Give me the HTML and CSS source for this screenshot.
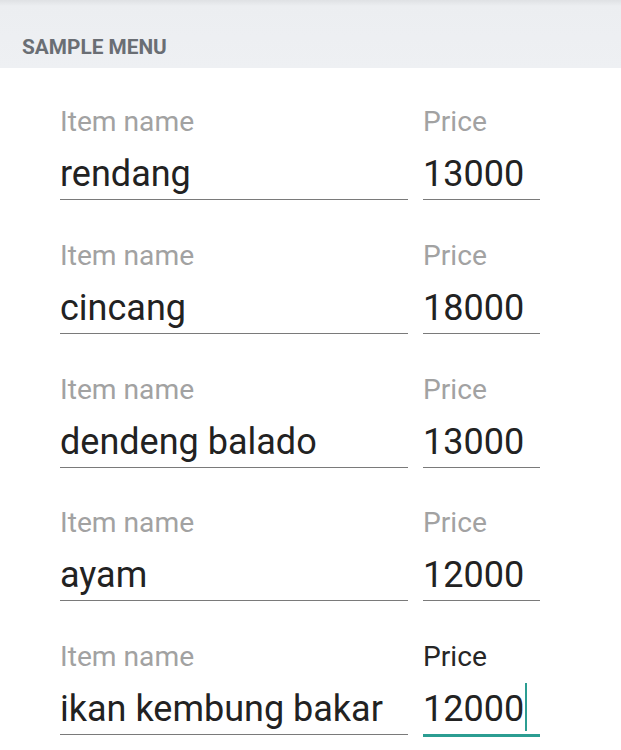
FILE: index.html
```html
<!DOCTYPE html>
<html lang="id">
<head>
  <meta charset="UTF-8" />
  <meta name="viewport" content="width=device-width, initial-scale=1" />
  <title>Sample Menu</title>
  <link rel="stylesheet" href="styles.css">
</head>
<body>

  <header class="bar">
    <h1>SAMPLE MENU</h1>
  </header>

  <main class="menu">

    <div class="row">
      <div class="field name">
        <label>Item name</label>
        <div class="value">rendang</div>
      </div>
      <div class="field price">
        <label>Price</label>
        <div class="value">13000</div>
      </div>
    </div>

    <div class="row">
      <div class="field name">
        <label>Item name</label>
        <div class="value">cincang</div>
      </div>
      <div class="field price">
        <label>Price</label>
        <div class="value">18000</div>
      </div>
    </div>

    <div class="row">
      <div class="field name">
        <label>Item name</label>
        <div class="value">dendeng balado</div>
      </div>
      <div class="field price">
        <label>Price</label>
        <div class="value">13000</div>
      </div>
    </div>

    <div class="row">
      <div class="field name">
        <label>Item name</label>
        <div class="value">ayam</div>
      </div>
      <div class="field price">
        <label>Price</label>
        <div class="value">12000</div>
      </div>
    </div>

    <div class="row">
      <div class="field name">
        <label>Item name</label>
        <div class="value">ikan kembung bakar</div>
      </div>
      <div class="field price focused">
        <label>Price</label>
        <div class="value">12000<span class="caret"></span></div>
      </div>
    </div>

  </main>

</body>
</html>
```

FILE: styles.css
```css
/* Reset & Basic */
* {
  box-sizing: border-box;
}
body {
  margin: 0;
  font-family: Roboto, "Liberation Sans", sans-serif;
  background: #fff;
}

/* top bar */
.bar {
  height: 68px;
  padding: 35px 22px 9px;
  background: linear-gradient(#dfe1e4 0, #eceef1 6px, #eef0f3 100%);
}

.bar h1 {
  margin: 0;
  font-size: 20.8px;
  line-height: 24px;
  font-weight: 700;
  color: #6a6e74;
}

/* list of items */
.menu {
  display: flex;
  flex-direction: column;
  gap: 39.75px;
  padding: 38px 0 0 60px;
}

.row {
  display: flex;
  gap: 15px;
}

.field {
  display: flex;
  flex-direction: column;
}

.name {
  width: 348px;
}

.price {
  width: 117px;
}

label {
  font-size: 28.2px;
  line-height: 32px;
  color: #a2a2a2;
  margin-bottom: 14px;
}

.value {
  font-size: 36px;
  line-height: 45px;
  height: 48px;
  color: #222;
  border-bottom: 1px solid #7a7a7a;
  white-space: nowrap;
}

/* the field being edited */
.focused label {
  color: #262626;
}

.focused .value {
  border-bottom: 3px solid #2b9d92;
  height: 50px;
}

.caret {
  display: inline-block;
  width: 2px;
  height: 48px;
  margin-top: -4px;
  margin-left: 1px;
  vertical-align: top;
  background: #2b9d92;
}
```
